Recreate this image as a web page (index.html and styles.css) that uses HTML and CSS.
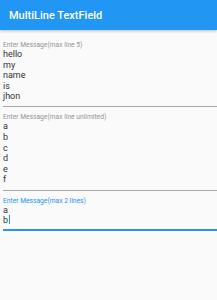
FILE: index.html
```html
<!DOCTYPE html>
<html lang="en">
<head>
    <meta charset="UTF-8">
    <meta name="viewport" content="width=device-width, initial-scale=1.0">
    <title>MultiLine TextField</title>
    <link rel="stylesheet" href="styles.css">
</head>
<body>
    <div class="app-bar">
        <h1>MultiLine TextField</h1>
    </div>

    <div class="content">
        <div class="field">
            <div class="label">Enter Message(max line 5)</div>
            <div class="text">hello<br>my<br>name<br>is<br>jhon</div>
        </div>

        <div class="field">
            <div class="label">Enter Message(max line unlimited)</div>
            <div class="text">a<br>b<br>c<br>d<br>e<br>f</div>
        </div>

        <div class="field focused">
            <div class="label">Enter Message(max 2 lines)</div>
            <div class="text">a<br>b<span class="caret"></span></div>
        </div>
    </div>
</body>
</html>
```

FILE: styles.css
```css
body{
    margin: 0;
    font-family: Roboto, "Noto Sans", sans-serif;
    background-color: #fafafa;
    height: 300px;
    overflow: hidden;
}

.app-bar{
    height: 30px;
    background-color: #2196f3;
    display: flex;
    align-items: center;
    padding-left: 9px;
    box-shadow: 0 1px 3px rgba(0, 0, 0, 0.25);
}

.app-bar h1{
    margin: 0;
    color: white;
    font-size: 11px;
    font-weight: 500;
}

.content{
    display: flex;
    flex-direction: column;
    gap: 6px;
    padding-top: 11px;
}

.field{
    margin-left: 3px;
    padding-bottom: 4.5px;
    border-bottom: 1px solid #a8a8a8;
}

.label{
    font-size: 6.7px;
    line-height: 8px;
    color: #959595;
}

.text{
    font-size: 9px;
    line-height: 10.6px;
    color: #333;
}

.focused{
    padding-bottom: 3px;
    border-bottom: 2px solid #2196f3;
}

.focused .label{
    color: #2196f3;
}

.caret{
    display: inline-block;
    width: 1px;
    height: 9px;
    margin-left: 1px;
    vertical-align: -1px;
    background-color: #2196f3;
}
```
